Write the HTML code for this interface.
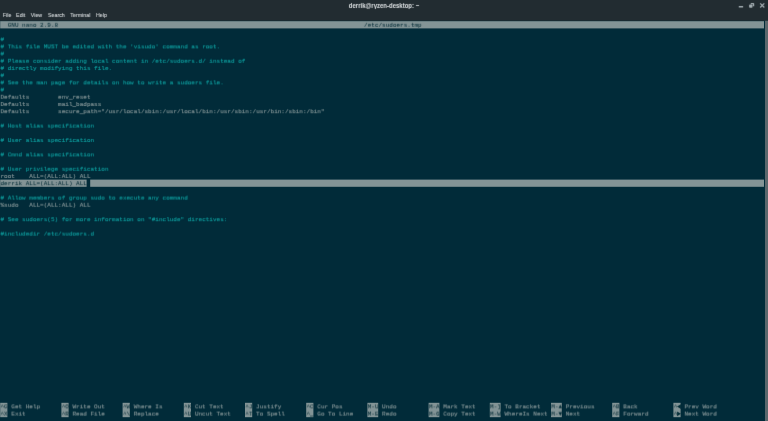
<!DOCTYPE html>
<html><head><meta charset="utf-8">
<style>
html,body{margin:0;padding:0;}
body{width:768px;height:421px;overflow:hidden;position:relative;background:#012b39;font-family:"Liberation Mono",monospace;}
.row{position:absolute;left:0;width:768px;height:10px;}
.t{position:absolute;top:0;white-space:pre;font-size:6px;line-height:7.2px;height:7.2px;transform:scaleY(1.03);transform-origin:0 0;}
.s{-webkit-text-stroke:0.15px currentColor;}
.c{-webkit-text-stroke:0.1px currentColor;}
.d{-webkit-text-stroke:0.05px currentColor;}
.title{position:absolute;left:0;width:768px;top:2.4px;text-align:center;font-family:"Liberation Sans",sans-serif;font-weight:bold;font-size:6px;line-height:7px;color:#dde1e3;transform:scaleY(1.1);transform-origin:0 0;}
.menu{position:absolute;top:11.4px;font-family:"Liberation Sans",sans-serif;font-size:5.3px;line-height:7px;color:#d2d6d8;white-space:pre;transform:scaleY(1.1);transform-origin:0 0;-webkit-text-stroke:0.1px currentColor;}
#wrap{position:absolute;left:0;top:0;width:768px;height:421px;filter:url(#bl);}
</style></head><body>
<svg width="0" height="0" style="position:absolute"><filter id="bl" color-interpolation-filters="sRGB" x="0" y="0" width="100%" height="100%"><feConvolveMatrix order="3" kernelMatrix="0.0072 0.0847 0.0072 0.0847 1 0.0847 0.0072 0.0847 0.0072" divisor="1.3673" edgeMode="duplicate"/></filter><filter id="f80" color-interpolation-filters="sRGB" x="0" y="-50%" width="100%" height="200%"><feConvolveMatrix order="1 2" kernelMatrix="0.200 0.800" divisor="1" targetX="0" targetY="1" edgeMode="none"/></filter><filter id="f20" color-interpolation-filters="sRGB" x="0" y="-50%" width="100%" height="200%"><feConvolveMatrix order="1 2" kernelMatrix="0.800 0.200" divisor="1" targetX="0" targetY="1" edgeMode="none"/></filter><filter id="f40" color-interpolation-filters="sRGB" x="0" y="-50%" width="100%" height="200%"><feConvolveMatrix order="1 2" kernelMatrix="0.600 0.400" divisor="1" targetX="0" targetY="1" edgeMode="none"/></filter><filter id="f60" color-interpolation-filters="sRGB" x="0" y="-50%" width="100%" height="200%"><feConvolveMatrix order="1 2" kernelMatrix="0.400 0.600" divisor="1" targetX="0" targetY="1" edgeMode="none"/></filter><filter id="f0" color-interpolation-filters="sRGB" x="0" y="-50%" width="100%" height="200%"><feConvolveMatrix order="1 2" kernelMatrix="1.000 0.000" divisor="1" targetX="0" targetY="1" edgeMode="none"/></filter></svg>
<svg style="position:absolute;left:0;top:0" width="768" height="421">
<rect x="0" y="0" width="768" height="20.75" fill="#222c31"/>
<rect x="765" y="20.75" width="3" height="400.25" fill="#5a676c"/>
<rect x="0.20" y="21.20" width="763.80" height="7.20" fill="#839496"/><rect x="0.20" y="179.60" width="86.40" height="7.20" fill="#839496"/><rect x="90.20" y="179.60" width="673.80" height="7.20" fill="#839496"/><rect x="0.20" y="402.80" width="7.20" height="7.20" fill="#839496"/><rect x="61.40" y="402.80" width="7.20" height="7.20" fill="#839496"/><rect x="122.60" y="402.80" width="7.20" height="7.20" fill="#839496"/><rect x="183.80" y="402.80" width="7.20" height="7.20" fill="#839496"/><rect x="245.00" y="402.80" width="7.20" height="7.20" fill="#839496"/><rect x="306.20" y="402.80" width="7.20" height="7.20" fill="#839496"/><rect x="367.40" y="402.80" width="10.80" height="7.20" fill="#839496"/><rect x="428.60" y="402.80" width="10.80" height="7.20" fill="#839496"/><rect x="489.80" y="402.80" width="10.80" height="7.20" fill="#839496"/><rect x="551.00" y="402.80" width="10.80" height="7.20" fill="#839496"/><rect x="612.20" y="402.80" width="7.20" height="7.20" fill="#839496"/><rect x="673.40" y="402.80" width="7.20" height="7.20" fill="#839496"/><rect x="0.20" y="410.00" width="7.20" height="7.20" fill="#839496"/><rect x="61.40" y="410.00" width="7.20" height="7.20" fill="#839496"/><rect x="122.60" y="410.00" width="7.20" height="7.20" fill="#839496"/><rect x="183.80" y="410.00" width="7.20" height="7.20" fill="#839496"/><rect x="245.00" y="410.00" width="7.20" height="7.20" fill="#839496"/><rect x="306.20" y="410.00" width="7.20" height="7.20" fill="#839496"/><rect x="367.40" y="410.00" width="10.80" height="7.20" fill="#839496"/><rect x="428.60" y="410.00" width="10.80" height="7.20" fill="#839496"/><rect x="489.80" y="410.00" width="10.80" height="7.20" fill="#839496"/><rect x="551.00" y="410.00" width="10.80" height="7.20" fill="#839496"/><rect x="612.20" y="410.00" width="7.20" height="7.20" fill="#839496"/><rect x="673.40" y="410.00" width="7.20" height="7.20" fill="#839496"/>
</svg>
<div id="wrap">
<div class="title">derrik@ryzen-desktop: ~</div>
<div class="menu" style="left:2.8px">File</div>
<div class="menu" style="left:16.1px">Edit</div>
<div class="menu" style="left:30.8px">View</div>
<div class="menu" style="left:48px">Search</div>
<div class="menu" style="left:70.3px">Terminal</div>
<div class="menu" style="left:96px">Help</div>
<svg style="position:absolute;left:0;top:0" width="768" height="21" viewBox="0 0 768 21">
<rect x="738.8" y="6" width="4.3" height="1.5" fill="#a3adb2"/>
<g fill="#a3adb2"><path d="M750.8 2.9 h2.6 q0.8 0 0.8 0.8 v2.5 h-1.3 v-1.9 h-2.1z"/><rect x="749.1" y="4.6" width="3.4" height="3.2" rx="0.8"/></g>
<path d="M760.2 3.3 L764.3 7.5 M764.3 3.3 L760.2 7.5" stroke="#a3adb2" stroke-width="1.2"/>
</svg>
<svg style="position:absolute;left:0;top:0" width="768" height="421"><path d="M681 404.2 L677 406.6 L681 409 Z M677.1 411.4 L680.9 413.8 L677.1 416.2 Z" fill="#002b36"/></svg>
<div class="row" style="top:21px;filter:url(#f80)"><div class="t d" style="left:7.70px;color:#002b36">GNU nano 2.9.8</div><div class="t d" style="left:364.10px;color:#002b36">/etc/sudoers.tmp</div></div>
<div class="row" style="top:36px;filter:url(#f20)"><div class="t c" style="left:0.50px;color:#0ea2a2">#</div></div>
<div class="row" style="top:43px;filter:url(#f40)"><div class="t c" style="left:0.50px;color:#0ea2a2"># This file MUST be edited with the &#x27;visudo&#x27; command as root.</div></div>
<div class="row" style="top:50px;filter:url(#f60)"><div class="t c" style="left:0.50px;color:#0ea2a2">#</div></div>
<div class="row" style="top:57px;filter:url(#f80)"><div class="t c" style="left:0.50px;color:#0ea2a2"># Please consider adding local content in /etc/sudoers.d/ instead of</div></div>
<div class="row" style="top:65px;filter:url(#f0)"><div class="t c" style="left:0.50px;color:#0ea2a2"># directly modifying this file.</div></div>
<div class="row" style="top:72px;filter:url(#f20)"><div class="t c" style="left:0.50px;color:#0ea2a2">#</div></div>
<div class="row" style="top:79px;filter:url(#f40)"><div class="t c" style="left:0.50px;color:#0ea2a2"># See the man page for details on how to write a sudoers file.</div></div>
<div class="row" style="top:86px;filter:url(#f60)"><div class="t c" style="left:0.50px;color:#0ea2a2">#</div></div>
<div class="row" style="top:93px;filter:url(#f80)"><div class="t s" style="left:0.50px;color:#839496">Defaults        env_reset</div></div>
<div class="row" style="top:101px;filter:url(#f0)"><div class="t s" style="left:0.50px;color:#839496">Defaults        mail_badpass</div></div>
<div class="row" style="top:108px;filter:url(#f20)"><div class="t s" style="left:0.50px;color:#839496">Defaults        secure_path=&quot;/usr/local/sbin:/usr/local/bin:/usr/sbin:/usr/bin:/sbin:/bin&quot;</div></div>
<div class="row" style="top:122px;filter:url(#f60)"><div class="t c" style="left:0.50px;color:#0ea2a2"># Host alias specification</div></div>
<div class="row" style="top:137px;filter:url(#f0)"><div class="t c" style="left:0.50px;color:#0ea2a2"># User alias specification</div></div>
<div class="row" style="top:151px;filter:url(#f40)"><div class="t c" style="left:0.50px;color:#0ea2a2"># Cmnd alias specification</div></div>
<div class="row" style="top:165px;filter:url(#f80)"><div class="t c" style="left:0.50px;color:#0ea2a2"># User privilege specification</div></div>
<div class="row" style="top:173px;filter:url(#f0)"><div class="t s" style="left:0.50px;color:#839496">root    ALL=(ALL:ALL) ALL</div></div>
<div class="row" style="top:180px;filter:url(#f20)"><div class="t d" style="left:0.50px;color:#002b36">derrik ALL=(ALL:ALL) ALL</div></div>
<div class="row" style="top:194px;filter:url(#f60)"><div class="t c" style="left:0.50px;color:#0ea2a2"># Allow members of group sudo to execute any command</div></div>
<div class="row" style="top:201px;filter:url(#f80)"><div class="t s" style="left:0.50px;color:#839496">%sudo   ALL=(ALL:ALL) ALL</div></div>
<div class="row" style="top:216px;filter:url(#f20)"><div class="t c" style="left:0.50px;color:#0ea2a2"># See sudoers(5) for more information on &quot;#include&quot; directives:</div></div>
<div class="row" style="top:230px;filter:url(#f60)"><div class="t c" style="left:0.50px;color:#0ea2a2">#includedir /etc/sudoers.d</div></div>
<div class="row" style="top:403px;filter:url(#f40)"><div class="t d" style="left:0.50px;color:#002b36">^G</div><div class="t s" style="left:11.30px;color:#839496">Get Help</div><div class="t d" style="left:61.70px;color:#002b36">^O</div><div class="t s" style="left:72.50px;color:#839496">Write Out</div><div class="t d" style="left:122.90px;color:#002b36">^W</div><div class="t s" style="left:133.70px;color:#839496">Where Is</div><div class="t d" style="left:184.10px;color:#002b36">^K</div><div class="t s" style="left:194.90px;color:#839496">Cut Text</div><div class="t d" style="left:245.30px;color:#002b36">^J</div><div class="t s" style="left:256.10px;color:#839496">Justify</div><div class="t d" style="left:306.50px;color:#002b36">^C</div><div class="t s" style="left:317.30px;color:#839496">Cur Pos</div><div class="t d" style="left:367.70px;color:#002b36">M-U</div><div class="t s" style="left:382.10px;color:#839496">Undo</div><div class="t d" style="left:428.90px;color:#002b36">M-A</div><div class="t s" style="left:443.30px;color:#839496">Mark Text</div><div class="t d" style="left:490.10px;color:#002b36">M-]</div><div class="t s" style="left:504.50px;color:#839496">To Bracket</div><div class="t d" style="left:551.30px;color:#002b36">M-▲</div><div class="t s" style="left:565.70px;color:#839496">Previous</div><div class="t d" style="left:612.50px;color:#002b36">^B</div><div class="t s" style="left:623.30px;color:#839496">Back</div><div class="t d" style="left:673.70px;color:#002b36">^ </div><div class="t s" style="left:684.50px;color:#839496">Prev Word</div></div>
<div class="row" style="top:410px;filter:url(#f60)"><div class="t d" style="left:0.50px;color:#002b36">^X</div><div class="t s" style="left:11.30px;color:#839496">Exit</div><div class="t d" style="left:61.70px;color:#002b36">^R</div><div class="t s" style="left:72.50px;color:#839496">Read File</div><div class="t d" style="left:122.90px;color:#002b36">^\</div><div class="t s" style="left:133.70px;color:#839496">Replace</div><div class="t d" style="left:184.10px;color:#002b36">^U</div><div class="t s" style="left:194.90px;color:#839496">Uncut Text</div><div class="t d" style="left:245.30px;color:#002b36">^T</div><div class="t s" style="left:256.10px;color:#839496">To Spell</div><div class="t d" style="left:306.50px;color:#002b36">^_</div><div class="t s" style="left:317.30px;color:#839496">Go To Line</div><div class="t d" style="left:367.70px;color:#002b36">M-E</div><div class="t s" style="left:382.10px;color:#839496">Redo</div><div class="t d" style="left:428.90px;color:#002b36">M-6</div><div class="t s" style="left:443.30px;color:#839496">Copy Text</div><div class="t d" style="left:490.10px;color:#002b36">M-W</div><div class="t s" style="left:504.50px;color:#839496">WhereIs Next</div><div class="t d" style="left:551.30px;color:#002b36">M-▼</div><div class="t s" style="left:565.70px;color:#839496">Next</div><div class="t d" style="left:612.50px;color:#002b36">^F</div><div class="t s" style="left:623.30px;color:#839496">Forward</div><div class="t d" style="left:673.70px;color:#002b36">^ </div><div class="t s" style="left:684.50px;color:#839496">Next Word</div></div>
</div></body></html>
